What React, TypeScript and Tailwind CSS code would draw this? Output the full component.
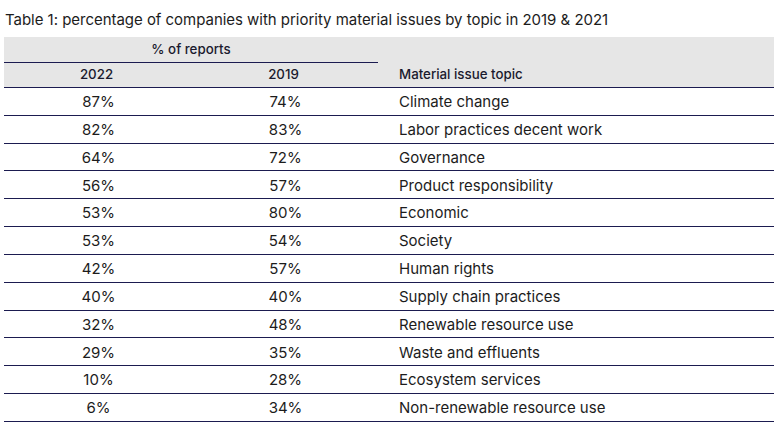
import React from "react";

const rows: [string, string, string][] = [
  ["87%", "74%", "Climate change"],
  ["82%", "83%", "Labor practices decent work"],
  ["64%", "72%", "Governance"],
  ["56%", "57%", "Product responsibility"],
  ["53%", "80%", "Economic"],
  ["53%", "54%", "Society"],
  ["42%", "57%", "Human rights"],
  ["40%", "40%", "Supply chain practices"],
  ["32%", "48%", "Renewable resource use"],
  ["29%", "35%", "Waste and effluents"],
  ["10%", "28%", "Ecosystem services"],
  ["6%", "34%", "Non-renewable resource use"],
];

export default function App() {
  return (
    <div
      className="w-[774px] h-[443px] bg-white text-[#1c1c1c] overflow-hidden"
      style={{ fontFamily: "Inter, 'Noto Sans', sans-serif" }}
    >
      <div className="h-[37px] pl-[5px] pt-[10px] text-[15px] leading-[20px] tracking-[-0.03px]">
        Table 1: percentage of companies with priority material issues by topic in 2019 &amp; 2021
      </div>
      <div className="ml-[4px]">
        <div className="bg-[#e6e6e6] text-[13.3px] font-medium text-[#1a1a2e]">
          <div className="flex h-[26px]">
            <div className="w-[374px] border-b-[1.5px] border-[#1b1b50] flex items-center justify-center pt-[1px]">
              % of reports
            </div>
          </div>
          <div className="flex h-[25px] items-center border-b-[1.5px] border-[#1b1b50]">
            <div className="w-[183px] text-center pl-[2px]">2022</div>
            <div className="w-[191px] text-center pl-[2px]">2019</div>
            <div className="pl-[21px]">Material issue topic</div>
          </div>
        </div>
        {rows.map((r, i) => (
          <div
            key={i}
            className="flex h-[27.83px] items-center border-b-[1.5px] border-[#1b1b50] text-[15px] pt-[2px]"
          >
            <div className="w-[183px] text-center pl-[6px]">{r[0]}</div>
            <div className="w-[191px] text-center pl-[6px]">{r[1]}</div>
            <div className="pl-[21px]">{r[2]}</div>
          </div>
        ))}
      </div>
    </div>
  );
}
